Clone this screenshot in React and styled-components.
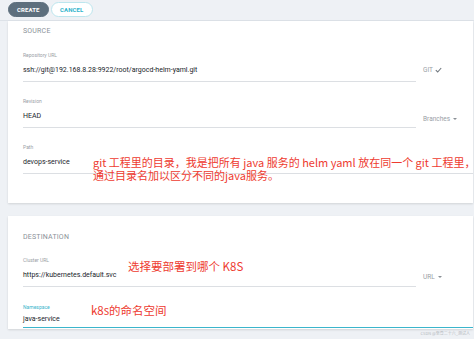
import React from "react";
import styled, { createGlobalStyle } from "styled-components";

const Global = createGlobalStyle`
  html, body { margin: 0; padding: 0; }
  body {
    background: #eef1f5;
    font-family: Roboto, "Liberation Sans", sans-serif;
    width: 474px;
    height: 339px;
    overflow: hidden;
  }
`;

const Page = styled.div`
  width: 474px;
  height: 339px;
  display: flex;
  flex-direction: column;
  position: relative;
`;

const Header = styled.div`
  height: 21px;
  box-sizing: border-box;
  border-bottom: 1px solid #dde2e8;
  background: #eef1f5;
  display: flex;
  align-items: center;
  gap: 2px;
  padding-left: 8px;
  padding-bottom: 1px;
`;

const Button = styled.button`
  height: 15px;
  padding: 0 ${(p) => (p.$primary ? "8px" : "8.5px")};
  border-radius: 8px;
  font-family: Roboto, "Liberation Sans", sans-serif;
  font-size: 6px;
  font-weight: 700;
  letter-spacing: 0.1px;
  line-height: 13px;
  cursor: pointer;
  background: ${(p) => (p.$primary ? "#5d6f7d" : "#ffffff")};
  color: ${(p) => (p.$primary ? "#ffffff" : "#2fb4cc")};
  border: 1px solid ${(p) => (p.$primary ? "#5d6f7d" : "#bde6ee")};
`;

const Content = styled.div`
  display: flex;
  flex-direction: column;
  gap: 13px;
  padding: 0 1px 0 8px;
`;

const Card = styled.section`
  background: #ffffff;
  box-shadow: 0 1px 2px rgba(0, 0, 0, 0.12);
  padding: ${(p) => p.$pt}px 0 ${(p) => p.$pb}px 15px;
`;

const SectionTitle = styled.div`
  font-size: 7px;
  line-height: 10px;
  color: #8b9199;
  letter-spacing: 0.2px;
  margin-bottom: ${(p) => p.$mb}px;
`;

const Fields = styled.div`
  display: flex;
  flex-direction: column;
  gap: ${(p) => p.$gap || 15}px;
`;

const Row = styled.div`
  display: flex;
  align-items: flex-start;
`;

const Field = styled.div`
  flex: 1;
  position: relative;
  border-bottom: 1.5px solid ${(p) => (p.$focused ? "#3bb5cc" : "#dcdfe3")};
`;

const Label = styled.div`
  font-size: 5px;
  line-height: 8px;
  width: fit-content;
  color: ${(p) => (p.$focused ? "#3bb5cc" : "#9aa0a6")};
`;

const Value = styled.div`
  font-size: 7px;
  line-height: 14px;
  width: fit-content;
  color: #20252b;
  margin-top: ${(p) => (p.$focused ? 1 : 4)}px;
  padding-bottom: ${(p) => (p.$focused ? 1 : 4)}px;
  white-space: nowrap;
`;

const Side = styled.div`
  width: 57px;
  box-sizing: border-box;
  padding-left: 7px;
  padding-top: ${(p) => p.$pt}px;
  font-size: 6.5px;
  line-height: 10px;
  color: #9aa0a6;
  display: flex;
  align-items: center;
  gap: 2px;
`;

const Caret = styled.span`
  display: inline-block;
  width: 0;
  height: 0;
  border-left: 2px solid transparent;
  border-right: 2px solid transparent;
  border-top: 2.5px solid #8a9096;
  margin-left: 1px;
`;

const Note = styled.div`
  position: absolute;
  left: ${(p) => p.$left}px;
  top: ${(p) => p.$top}px;
  font-family: "Noto Sans CJK SC", "Noto Sans", sans-serif;
  font-size: ${(p) => p.$size || 11}px;
  line-height: 13px;
  color: #ee3b30;
  white-space: nowrap;
`;

const Watermark = styled.div`
  position: absolute;
  right: 4px;
  bottom: 3px;
  font-family: "Noto Sans CJK SC", sans-serif;
  font-size: 4px;
  line-height: 5px;
  color: #b5b9be;
`;

const Check = () => (
  <svg width="7" height="6" viewBox="0 0 7 6">
    <path d="M0.8 3.2 L2.7 5 L6.2 1" fill="none" stroke="#6f767d" strokeWidth="1.1" />
  </svg>
);

export default function App() {
  return (
    <Page>
      <Global />
      <Header>
        <Button $primary>CREATE</Button>
        <Button>CANCEL</Button>
      </Header>
      <Content>
        <Card $pt={5} $pb={29}>
          <SectionTitle $mb={15}>SOURCE</SectionTitle>
          <Fields>
            <Row>
              <Field>
                <Label>Repository URL</Label>
                <Value>ssh://git@192.168.8.28:9922/root/argocd-helm-yaml.git</Value>
              </Field>
              <Side $pt={14}>
                GIT <Check />
              </Side>
            </Row>
            <Row>
              <Field>
                <Label>Revision</Label>
                <Value>HEAD</Value>
              </Field>
              <Side $pt={17}>
                Branches <Caret />
              </Side>
            </Row>
            <Row>
              <Field>
                <Label>Path</Label>
                <Value>devops-service</Value>
                <Note $left={70} $top={12.5}>
                  git 工程里的目录，我是把所有 java 服务的 helm yaml 放在同一个 git 工程里，
                  <br />
                  通过目录名加以区分不同的java服务。
                </Note>
              </Field>
            </Row>
          </Fields>
        </Card>
        <Card $pt={16} $pb={1}>
          <SectionTitle $mb={14}>DESTINATION</SectionTitle>
          <Fields $gap={15.5}>
            <Row>
              <Field>
                <Label>Cluster URL</Label>
                <Value>https://kubernetes.default.svc</Value>
                <Note $left={105} $top={3.5} $size={11.5}>
                  选择要部署到哪个 K8S
                </Note>
              </Field>
              <Side $pt={16}>
                URL <Caret />
              </Side>
            </Row>
            <Row>
              <Field $focused>
                <Label $focused>Namespace</Label>
                <Value $focused>java-service</Value>
                <Note $left={68} $top={1.5} $size={11.5}>
                  k8s的命名空间
                </Note>
              </Field>
            </Row>
          </Fields>
        </Card>
      </Content>
      <Watermark>CSDN @至尊二十六_测试人</Watermark>
    </Page>
  );
}
